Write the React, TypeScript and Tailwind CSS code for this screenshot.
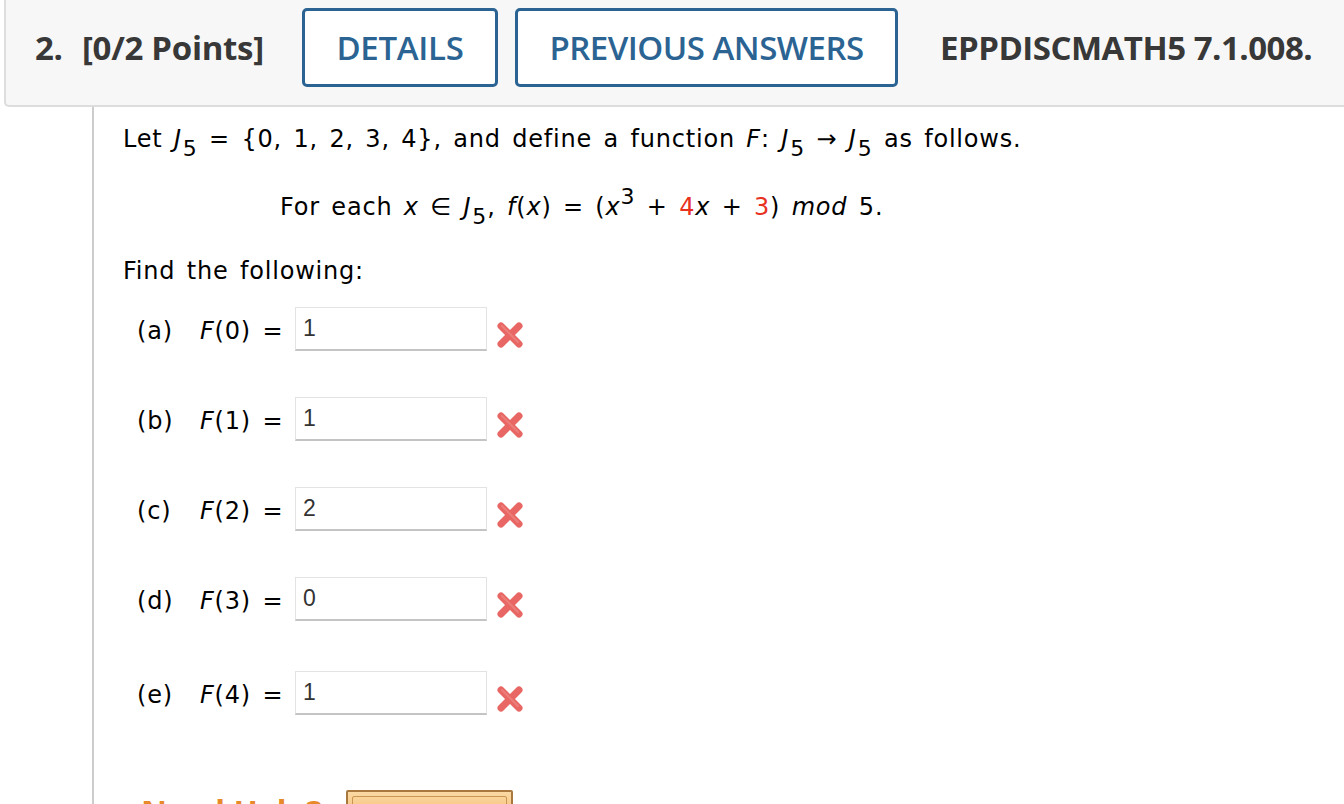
import React from "react";

const rows = [
  { label: "(a)", arg: "0", value: "1", h: "h-[90px]" },
  { label: "(b)", arg: "1", value: "1", h: "h-[90px]" },
  { label: "(c)", arg: "2", value: "2", h: "h-[90px]" },
  { label: "(d)", arg: "3", value: "0", h: "h-[94px]" },
  { label: "(e)", arg: "4", value: "1", h: "h-[90px]" },
];

function WrongMark() {
  return (
    <svg width="28" height="28" viewBox="0 0 28 28" className="shrink-0">
      <g stroke="#e65754" strokeWidth="7" strokeLinecap="round" opacity="0.9">
        <line x1="5" y1="5" x2="23" y2="23" />
        <line x1="23" y1="5" x2="5" y2="23" />
      </g>
      <g stroke="#f29a96" strokeWidth="2" strokeLinecap="round" opacity="0.45">
        <line x1="6" y1="5" x2="22" y2="21" />
      </g>
    </svg>
  );
}

function J5() {
  return (
    <span className="whitespace-nowrap">
      <i>J</i>
      <sub className="relative top-[9px] ml-[1px] text-[22px] not-italic">5</sub>
    </span>
  );
}

export default function App() {
  return (
    <div className="h-[804px] w-[1344px] overflow-hidden bg-white font-['DejaVu_Sans',Verdana,sans-serif] text-[24px] text-black">
      {/* question header */}
      <div className="ml-[4px] flex h-[107px] items-start rounded-bl-[5px] border-b-2 border-l-2 border-[#dddddd] bg-[#f7f7f7] pt-[8px] font-['Open_Sans',sans-serif]">
        <div className="flex h-[79px] items-center text-[33px] font-bold tracking-[-0.3px] text-[#383838]">
          <span className="ml-[29px] w-[47px]">2.</span>
          <span className="w-[220px]">[0/2 Points]</span>
        </div>
        <button className="flex h-[79px] w-[196px] items-center justify-center rounded-[5px] border-[3px] border-[#2b6493] bg-white text-[33px] font-semibold tracking-[-0.3px] text-[#2b6493]">
          DETAILS
        </button>
        <button className="ml-[17px] flex h-[79px] w-[383px] items-center justify-center rounded-[5px] border-[3px] border-[#2b6493] bg-white text-[33px] font-semibold tracking-[-0.5px] text-[#2b6493]">
          PREVIOUS ANSWERS
        </button>
        <span className="ml-[42px] flex h-[79px] items-center text-[33px] font-bold tracking-[-0.5px] text-[#383838]">
          EPPDISCMATH5 7.1.008.
        </span>
      </div>

      {/* question body */}
      <div className="ml-[92px] h-[700px] border-l-2 border-[#cccccc] pl-[29px] tracking-[0.8px] [word-spacing:3px]">
        <p className="pt-[14px] leading-[36px]">
          Let <J5 /> = {"{"}0, 1, 2, 3, 4{"}"}, and define a function <i>F</i>: <J5 /> → <J5 /> as follows.
        </p>
        <p className="ml-[157px] mt-[32px] leading-[36px]">
          For each <i>x</i> ∈ <J5 />, <i>f</i>(<i>x</i>) = (<i>x</i>
          <sup className="relative -top-[11px] text-[22px]">3</sup> + <span className="text-[#e8321f]">4</span>
          <i>x</i> + <span className="text-[#e8321f]">3</span>) <i>mod</i> 5.
        </p>
        <p className="mt-[28px] leading-[36px]">Find the following:</p>

        <div className="mt-[18px]">
          {rows.map((r) => (
            <div key={r.label} className={`flex items-start ${r.h}`}>
              <span className="ml-[14px] mt-[6px] w-[63px]">{r.label}</span>
              <span className="mt-[6px] w-[95px] whitespace-nowrap">
                <i>F</i>({r.arg}) =
              </span>
              <div className="flex h-[44px] w-[192px] items-center border border-b-2 border-[#e3e3e3] border-b-[#c4c4c4] bg-white pl-[7px] font-['Liberation_Sans',Arial,sans-serif] text-[23px] tracking-normal text-[#333333]">
                {r.value}
              </div>
              <div className="ml-[9px] mt-[14px]">
                <WrongMark />
              </div>
            </div>
          ))}
        </div>

        <div className="mt-[29px] flex items-start">
          <span className="ml-[18px] mt-[2px] w-[205px] font-['Open_Sans',sans-serif] text-[32px] font-bold leading-[40px] tracking-normal text-[#e8892a] [word-spacing:0px]">
            Need Help?
          </span>
          <div className="h-[40px] w-[167px] rounded-[2px] border-2 border-[#a8783e] bg-gradient-to-b from-[#fbd9a4] to-[#f4b25a] p-[4px]">
            <div className="h-full w-full rounded-[2px] border border-[#c99552]" />
          </div>
        </div>
      </div>
    </div>
  );
}
